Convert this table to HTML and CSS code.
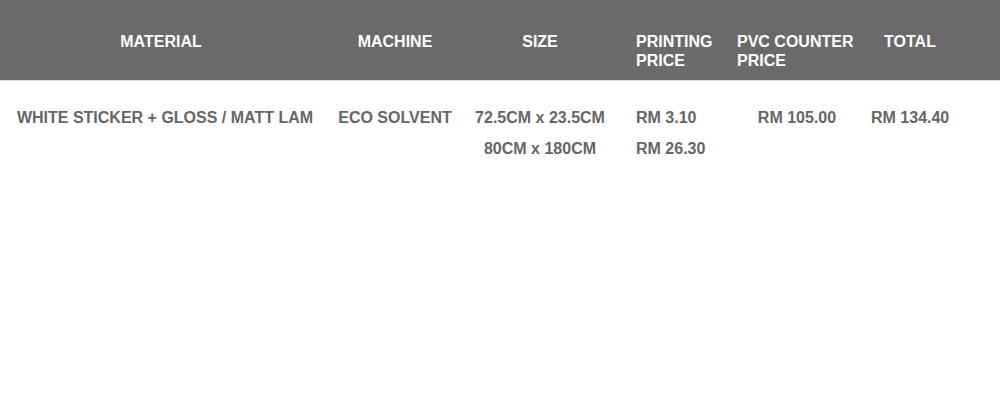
FILE: index.html
```html
<!DOCTYPE html>
<html>
<head>
<meta charset="utf-8">
<link rel="stylesheet" href="styles.css">
</head>
<body>
<div class="price-table">
  <div class="row head">
    <div class="cell c-center c-material">MATERIAL</div>
    <div class="cell c-center">MACHINE</div>
    <div class="cell c-center">SIZE</div>
    <div class="cell c-left c-print">PRINTING PRICE</div>
    <div class="cell c-left c-pvc">PVC COUNTER PRICE</div>
    <div class="cell c-center">TOTAL</div>
  </div>
  <div class="row body">
    <div class="cell c-center"><p>WHITE STICKER + GLOSS / MATT LAM</p></div>
    <div class="cell c-center"><p>ECO SOLVENT</p></div>
    <div class="cell c-center"><p>72.5CM x 23.5CM</p><p>80CM x 180CM</p></div>
    <div class="cell c-left c-print"><p>RM 3.10</p><p>RM 26.30</p></div>
    <div class="cell c-center c-pvc"><p>RM 105.00</p></div>
    <div class="cell c-center"><p>RM 134.40</p></div>
  </div>
</div>
</body>
</html>
```

FILE: styles.css
```css
html, body {
  margin: 0;
  padding: 0;
  background: #ffffff;
}

body {
  font-family: "Liberation Sans", Arial, sans-serif;
  font-weight: bold;
  font-size: 16px;
  line-height: 19px;
}

.row {
  display: grid;
  grid-template-columns: 330px 130px 160px 107px 136px 94px;
}

.head {
  background: #6a6a6a;
  color: #ffffff;
  box-sizing: border-box;
  height: 81px;
  padding-top: 32px;
  border-bottom: 1px solid #dcdcdc;
}

.body {
  color: #666666;
  padding-top: 27px;
}

.cell {
  padding: 0 8px;
}

.c-center {
  text-align: center;
}

.c-left {
  text-align: left;
}

.c-material {
  padding-right: 16px;
}

.c-print {
  padding-left: 16px;
}

.c-pvc {
  padding-left: 10px;
  padding-right: 6px;
}

.cell p {
  margin: 0 0 12px 0;
  white-space: nowrap;
}
```
